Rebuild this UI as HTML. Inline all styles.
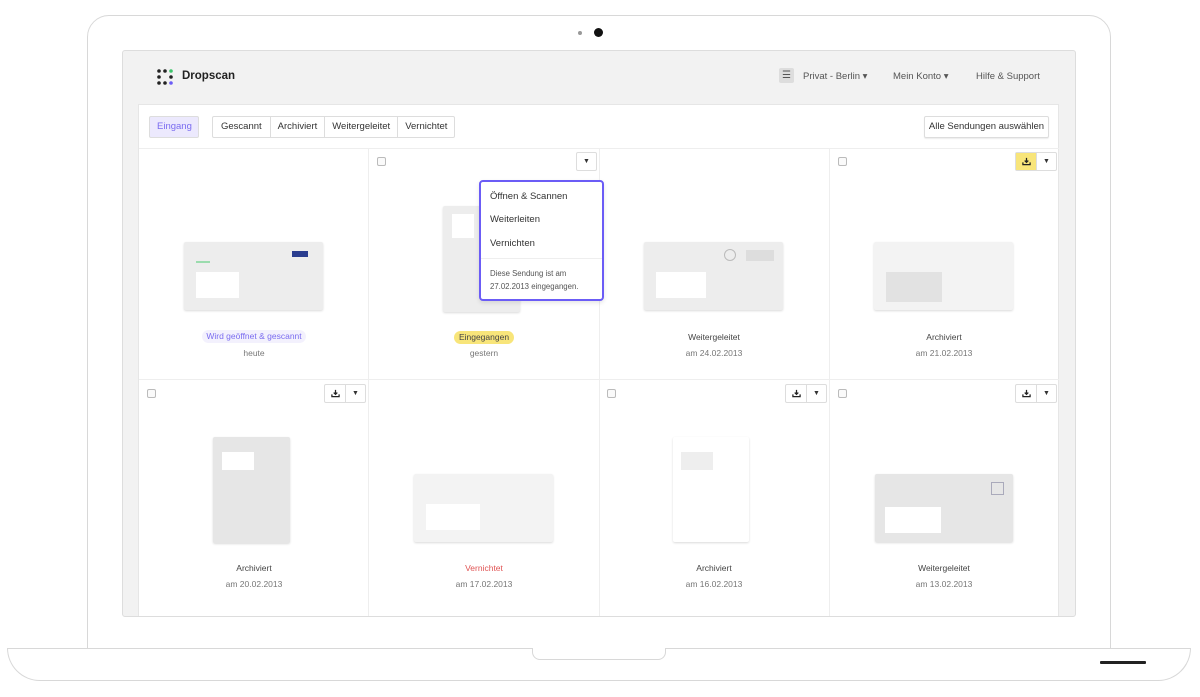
<!DOCTYPE html>
<html><head><meta charset="utf-8"><style>
*{box-sizing:border-box;margin:0;padding:0}
body{width:1200px;height:697px;background:#fff;position:relative;overflow:hidden;font-family:"Liberation Sans",sans-serif;color:#444}
.a{position:absolute}
.bezel{left:87px;top:15px;width:1024px;height:650px;border:1.5px solid #d8d8d8;border-radius:22px 22px 0 0;background:#fff}
.base{left:7px;top:648px;width:1184px;height:33px;border:1.5px solid #d8d8d8;border-radius:0 0 40px 40px;background:#fff}
.notch{left:532px;top:648px;width:134px;height:12px;border:1.5px solid #d8d8d8;border-top:none;border-radius:0 0 8px 8px;background:#fff}
.screen{left:122px;top:50px;width:954px;height:567px;background:#f2f2f2;border:1px solid #ddd;border-radius:3px}
.panel{left:138px;top:104px;width:921px;height:512px;background:#fff;border:1px solid #e6e6e6;border-bottom:none}
.nav{font-size:9.5px;color:#555;top:71px;white-space:nowrap}
.tab{font-size:9.5px;color:#333;height:22px;line-height:20px;border:1px solid #ddd;padding:0 7px;top:116px;white-space:nowrap}
.env{background:#ededed;box-shadow:0 1px 2px rgba(0,0,0,.15);border-radius:2px}
.win{background:#fff;position:absolute}
.lbl{font-size:8.5px;color:#444;text-align:center;width:230px}
.dt{font-size:8.5px;color:#777;text-align:center;width:230px}
.cb{width:9px;height:9px;border:1px solid #bbb;border-radius:2px;background:#fafafa}
.btn{height:19px;border:1px solid #ddd;border-radius:2px;background:#fff;display:flex}
.btn span{display:flex;align-items:center;justify-content:center;width:20px;height:17px;font-size:7px;color:#333}
.btn span+span{border-left:1px solid #ddd}
</style></head><body>
<svg width="0" height="0" style="position:absolute"><defs><symbol id="dl" viewBox="0 0 10 10"><path d="M5 1v5M3 4l2 2 2-2M1 6v2.5h8V6" stroke="#222" stroke-width="1.4" fill="none"/></symbol></defs></svg>
<div class="a bezel"></div>
<div class="a base"></div>
<div class="a notch"></div>
<div class="a" style="left:1100px;top:661px;width:46px;height:3px;background:#222;border-radius:1px"></div>
<div class="a" style="left:578px;top:31px;width:4px;height:4px;border-radius:50%;background:#999"></div>
<div class="a" style="left:594px;top:28px;width:9px;height:9px;border-radius:50%;background:#111"></div>
<div class="a screen"></div>
<svg class="a" style="left:157px;top:69px" width="18" height="18" viewBox="0 0 18 18">
<g fill="#222"><circle cx="2" cy="2" r="1.8"/><circle cx="8" cy="2" r="1.8"/><circle cx="2" cy="8" r="1.8"/><circle cx="14" cy="8" r="1.8"/><circle cx="2" cy="14" r="1.8"/><circle cx="8" cy="14" r="1.8"/></g>
<circle cx="14" cy="2" r="1.8" fill="#3ec46d"/><circle cx="14" cy="14" r="1.8" fill="#6b5cf6"/></svg>
<div class="a" style="left:182px;top:70px;font-size:11.5px;font-weight:bold;color:#222">Dropscan</div>
<div class="a" style="left:779px;top:68px;width:15px;height:15px;background:#ddd;border-radius:2px;font-size:10px;text-align:center;line-height:15px;color:#555">☰</div>
<div class="a nav" style="left:803px">Privat - Berlin ▾</div>
<div class="a nav" style="left:893px">Mein Konto ▾</div>
<div class="a nav" style="left:976px">Hilfe &amp; Support</div>
<div class="a panel"></div>
<div class="a tab" style="left:149px;width:50px;background:#ece9fd;color:#7a6cf0;border-radius:2px;text-align:center">Eingang</div>
<div class="a" style="left:212px;top:116px;height:22px;border:1px solid #ddd;display:flex;font-size:9.5px;color:#333;line-height:20px;border-radius:2px;white-space:nowrap">
<span style="padding:0 8px">Gescannt</span><span style="padding:0 7px;border-left:1px solid #ddd">Archiviert</span><span style="padding:0 7px;border-left:1px solid #ddd">Weitergeleitet</span><span style="padding:0 7px;border-left:1px solid #ddd">Vernichtet</span></div>
<div class="a tab" style="left:924px;width:125px;border-radius:2px;box-shadow:0 1px 1px rgba(0,0,0,.08);text-align:center;padding:0">Alle Sendungen auswählen</div>
<div class="a" style="left:139px;top:148px;width:920px;height:1px;background:#eee"></div>
<div class="a" style="left:139px;top:379px;width:920px;height:1px;background:#eee"></div>
<div class="a" style="left:368px;top:149px;width:1px;height:467px;background:#eee"></div>
<div class="a" style="left:599px;top:149px;width:1px;height:467px;background:#eee"></div>
<div class="a" style="left:829px;top:149px;width:1px;height:467px;background:#eee"></div>
<!-- row 1 -->
<div class="a env" style="left:184px;top:242px;width:139px;height:68px"><div class="win" style="left:12px;top:30px;width:43px;height:26px"></div><div class="a" style="left:108px;top:9px;width:16px;height:6px;background:#2a3d8f"></div><div class="a" style="left:12px;top:19px;width:14px;height:2px;background:#9bdcae"></div></div>
<div class="a" style="left:202px;top:330px;width:104px;height:13px;background:#f3f1fd;border-radius:7px;font-size:8.5px;color:#7a6cf0;text-align:center;line-height:13px">Wird geöffnet &amp; gescannt</div>
<div class="a dt" style="left:139px;top:348px">heute</div>

<div class="a cb" style="left:377px;top:157px"></div>
<div class="a env" style="left:443px;top:206px;width:77px;height:106px"><div class="win" style="left:9px;top:8px;width:22px;height:24px"></div></div>
<div class="a" style="left:454px;top:331px;width:60px;height:13px;background:#f8e57a;border-radius:7px;font-size:8.5px;color:#444;text-align:center;line-height:13px">Eingegangen</div>
<div class="a dt" style="left:369px;top:348px">gestern</div>
<div class="a btn" style="left:576px;top:152px;width:21px"><span>▼</span></div>
<div class="a" style="left:479px;top:180px;width:125px;height:121px;border:2px solid #6b5cf6;border-radius:4px;background:#fff;box-shadow:0 2px 4px rgba(0,0,0,.1)">
<div class="a" style="left:9px;top:9px;font-size:9.5px;color:#333">Öffnen &amp; Scannen</div>
<div class="a" style="left:9px;top:32px;font-size:9.5px;color:#333">Weiterleiten</div>
<div class="a" style="left:9px;top:56px;font-size:9.5px;color:#333">Vernichten</div>
<div class="a" style="left:0;top:76px;width:121px;height:1px;background:#eee"></div>
<div class="a" style="left:9px;top:85px;font-size:7.8px;color:#555;line-height:13px">Diese Sendung ist am<br>27.02.2013 eingegangen.</div></div>

<div class="a env" style="left:644px;top:242px;width:139px;height:68px"><div class="win" style="left:12px;top:30px;width:50px;height:26px"></div><div class="a" style="left:80px;top:7px;width:12px;height:12px;border:1px solid #bbb;border-radius:50%"></div><div class="a" style="left:102px;top:8px;width:28px;height:11px;background:#ddd"></div></div>
<div class="a lbl" style="left:599px;top:332px">Weitergeleitet</div>
<div class="a dt" style="left:599px;top:348px">am 24.02.2013</div>

<div class="a cb" style="left:838px;top:157px"></div>
<div class="a btn" style="left:1015px;top:152px;width:42px"><span style="background:#f8e57a"><svg width="9" height="9"><use href="#dl"/></svg></span><span>▼</span></div>
<div class="a env" style="left:874px;top:242px;width:139px;height:68px;background:#f3f3f3"><div class="win" style="left:12px;top:30px;width:56px;height:30px;background:#e2e2e2"></div></div>
<div class="a lbl" style="left:829px;top:332px">Archiviert</div>
<div class="a dt" style="left:829px;top:348px">am 21.02.2013</div>
<!-- row 2 -->
<div class="a cb" style="left:147px;top:389px"></div>
<div class="a btn" style="left:324px;top:384px;width:42px"><span><svg width="9" height="9"><use href="#dl"/></svg></span><span>▼</span></div>
<div class="a env" style="left:213px;top:437px;width:77px;height:106px;background:#e6e6e6"><div class="win" style="left:9px;top:15px;width:32px;height:18px"></div></div>
<div class="a lbl" style="left:139px;top:563px">Archiviert</div>
<div class="a dt" style="left:139px;top:579px">am 20.02.2013</div>

<div class="a env" style="left:414px;top:474px;width:139px;height:68px;background:#f3f3f3"><div class="win" style="left:12px;top:30px;width:54px;height:26px"></div></div>
<div class="a lbl" style="left:369px;top:563px;color:#e05353">Vernichtet</div>
<div class="a dt" style="left:369px;top:579px">am 17.02.2013</div>

<div class="a cb" style="left:607px;top:389px"></div>
<div class="a btn" style="left:785px;top:384px;width:42px"><span><svg width="9" height="9"><use href="#dl"/></svg></span><span>▼</span></div>
<div class="a env" style="left:673px;top:437px;width:76px;height:105px;background:#fff"><div class="win" style="left:8px;top:15px;width:32px;height:18px;background:#eee"></div></div>
<div class="a lbl" style="left:599px;top:563px">Archiviert</div>
<div class="a dt" style="left:599px;top:579px">am 16.02.2013</div>

<div class="a cb" style="left:838px;top:389px"></div>
<div class="a btn" style="left:1015px;top:384px;width:42px"><span><svg width="9" height="9"><use href="#dl"/></svg></span><span>▼</span></div>
<div class="a env" style="left:875px;top:474px;width:138px;height:68px;background:#e6e6e6"><div class="win" style="left:10px;top:33px;width:56px;height:26px"></div><div class="a" style="left:116px;top:8px;width:13px;height:13px;border:1px solid #aab"></div></div>
<div class="a lbl" style="left:829px;top:563px">Weitergeleitet</div>
<div class="a dt" style="left:829px;top:579px">am 13.02.2013</div>
</body></html>
